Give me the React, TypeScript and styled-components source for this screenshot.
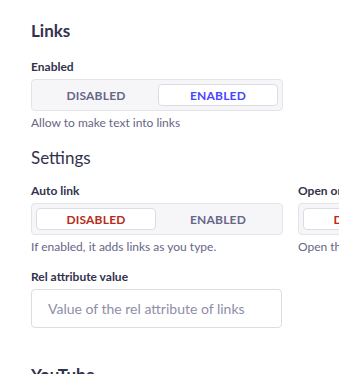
import styled, { createGlobalStyle } from 'styled-components';

const Global = createGlobalStyle`
  html, body { margin: 0; padding: 0; background: #ffffff; overflow: hidden; }
  body { font-family: Lato, "Noto Sans", sans-serif; color: #32324d; }
  * { box-sizing: border-box; }
`

const Page = styled.main`
  padding: 19px 0 0 31px;
  width: 339px;
  height: 374px;
  overflow: hidden;
  display: flex;
  flex-direction: column;
`
const Title = styled.h2<{ $weight?: number }>`
  margin: 0;
  font-size: 17px;
  font-weight: ${p => p.$weight || 700};
  line-height: 24px;
  color: #32324d;
`
const Section = styled.section<{ $gap?: number; $inner?: number }>`
  display: flex;
  flex-direction: column;
  gap: ${p => p.$inner || 16}px;
  margin-bottom: ${p => p.$gap || 0}px;
`
const Grid = styled.div`
  display: grid;
  grid-template-columns: 252px 252px;
  column-gap: 15px;
`
const Stack = styled.div`
  display: flex;
  flex-direction: column;
  gap: 14px;
`
const Field = styled.div`
  display: flex;
  flex-direction: column;
  width: 252px;
`
const Label = styled.label`
  font-size: 12px;
  font-weight: 700;
  line-height: 16px;
  color: #32324d;
  margin-bottom: 4px;
  white-space: nowrap;
`
const Toggle = styled.div`
  display: flex;
  height: 32px;
  padding: 4px;
  background: #f6f6f9;
  border: 1px solid #e3e3ea;
  border-radius: 4px;
  gap: 2px;
`
const Option = styled.button<{ $active: boolean; $tone: 'danger' | 'primary' }>`
  flex: 1;
  font-family: inherit;
  font-size: 12px;
  font-weight: 700;
  letter-spacing: 0.2px;
  text-transform: uppercase;
  cursor: pointer;
  border-radius: 4px;
  border: 1px solid ${p => (p.$active ? '#dcdce4' : 'transparent')};
  background: ${p => (p.$active ? '#ffffff' : 'transparent')};
  color: ${p => (!p.$active ? '#666687' : p.$tone === 'danger' ? '#b72b1a' : '#4945ff')};
  padding: 0;
`
const Hint = styled.p`
  margin: 4px 0 0;
  font-size: 12px;
  line-height: 16px;
  color: #666687;
  white-space: nowrap;
`
const Input = styled.input`
  height: 39px;
  width: 251px;
  padding: 0 16px;
  font-family: inherit;
  font-size: 14px;
  border: 1px solid #dcdce4;
  border-radius: 4px;
  color: #32324d;
  &::placeholder { color: #8e8ea9; }
`

const Switch = ({ on }: { on: boolean }) => (
  <Toggle>
    <Option $active={!on} $tone="danger">Disabled</Option>
    <Option $active={on} $tone="primary">Enabled</Option>
  </Toggle>
)

export default function App() {
  return (
    <Page>
      <Global />
      <Section $gap={15}>
        <Title>Links</Title>
        <Field>
          <Label>Enabled</Label>
          <Switch on />
          <Hint>Allow to make text into links</Hint>
        </Field>
      </Section>
      <Section $gap={35} $inner={13}>
        <Title $weight={400}>Settings</Title>
        <Stack>
          <Grid>
            <Field>
              <Label>Auto link</Label>
              <Switch on={false} />
              <Hint>If enabled, it adds links as you type.</Hint>
            </Field>
            <Field>
              <Label>Open on click</Label>
              <Switch on={false} />
              <Hint>Open the link when clicked</Hint>
            </Field>
          </Grid>
          <Field>
            <Label>Rel attribute value</Label>
            <Input placeholder="Value of the rel attribute of links" />
          </Field>
        </Stack>
      </Section>
      <Title>YouTube</Title>
    </Page>
  )
}
